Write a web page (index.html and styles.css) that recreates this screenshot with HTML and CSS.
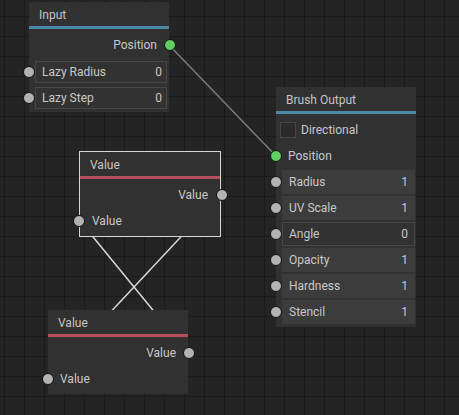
FILE: index.html
```html
<!DOCTYPE html>
<html>
<head>
<meta charset="utf-8">
<link rel="stylesheet" href="styles.css">
</head>
<body>
<div class="canvas">
  <svg class="wires" width="459" height="415" viewBox="0 0 459 415">
    <line x1="169" y1="45" x2="276" y2="156" class="wire"/>
    <line x1="80" y1="221" x2="188" y2="353" class="wire wire-sel"/>
    <line x1="220" y1="195" x2="48" y2="379" class="wire wire-sel"/>
  </svg>

  <div class="node node-input">
    <div class="node-title">Input</div>
    <div class="node-bar bar-blue"></div>
    <div class="node-body">
      <div class="row row-out"><span class="label">Position</span><span class="port port-out port-green"></span></div>
      <div class="row row-in row-compact"><span class="port port-in"></span><div class="field field-outline"><span>Lazy Radius</span><span>0</span></div></div>
      <div class="row row-in row-compact"><span class="port port-in"></span><div class="field field-outline"><span>Lazy Step</span><span>0</span></div></div>
    </div>
  </div>

  <div class="node node-brush">
    <div class="node-title">Brush Output</div>
    <div class="node-bar bar-blue"></div>
    <div class="node-body">
      <div class="row row-check"><span class="checkbox"></span><span class="label">Directional</span></div>
      <div class="row row-in"><span class="port port-in port-green"></span><span class="label label-in">Position</span></div>
      <div class="row row-in"><span class="port port-in"></span><div class="field"><span>Radius</span><span>1</span></div></div>
      <div class="row row-in"><span class="port port-in"></span><div class="field"><span>UV Scale</span><span>1</span></div></div>
      <div class="row row-in"><span class="port port-in"></span><div class="field field-outline"><span>Angle</span><span>0</span></div></div>
      <div class="row row-in"><span class="port port-in"></span><div class="field"><span>Opacity</span><span>1</span></div></div>
      <div class="row row-in"><span class="port port-in"></span><div class="field"><span>Hardness</span><span>1</span></div></div>
      <div class="row row-in"><span class="port port-in"></span><div class="field"><span>Stencil</span><span>1</span></div></div>
    </div>
  </div>

  <div class="node node-value1 node-selected">
    <div class="node-title">Value</div>
    <div class="node-bar bar-red"></div>
    <div class="node-body">
      <div class="row row-out"><span class="label">Value</span><span class="port port-out"></span></div>
      <div class="row row-in"><span class="port port-in"></span><span class="label label-in">Value</span></div>
    </div>
  </div>

  <div class="node node-value2">
    <div class="node-title">Value</div>
    <div class="node-bar bar-red"></div>
    <div class="node-body">
      <div class="row row-out"><span class="label">Value</span><span class="port port-out"></span></div>
      <div class="row row-in"><span class="port port-in"></span><span class="label label-in">Value</span></div>
    </div>
  </div>
</div>
</body>
</html>
```

FILE: styles.css
```css
html, body {
  margin: 0;
  padding: 0;
  background: #232323;
}

.canvas {
  position: relative;
  width: 459px;
  height: 415px;
  overflow: hidden;
  background-color: #242424;
  background-image:
    linear-gradient(to right, #1a1a1a 1px, transparent 1px),
    linear-gradient(to bottom, #1a1a1a 1px, transparent 1px);
  background-size: 20px 20px;
  background-position: 4px 16px;
  font-family: Roboto, "Noto Sans", sans-serif;
  font-size: 12px;
  color: #c8c8c8;
}

.wires {
  position: absolute;
  left: 0;
  top: 0;
}

.wire {
  stroke: #7c7c7c;
  stroke-width: 1.5;
}

.wire-sel {
  stroke: #d8d8d8;
}

.node {
  position: absolute;
  width: 140px;
  box-sizing: border-box;
  background: #313131;
  display: flex;
  flex-direction: column;
}

.node-selected {
  border: 1px solid #d6d6d6;
}

.node-input { left: 29px; top: 2px; }
.node-brush { left: 276px; top: 87px; }
.node-value1 { left: 79px; top: 151px; width: 142px; }
.node-value2 { left: 48px; top: 310px; }

.node-title {
  height: 24px;
  box-sizing: border-box;
  padding-top: 2px;
  line-height: 22px;
  padding-left: 10px;
  color: #c4c4c4;
}

.node-bar {
  height: 3px;
}

.bar-blue { background: #4a88a6; }
.bar-red { background: #b44f59; }

.node-body {
  display: flex;
  flex-direction: column;
  gap: 2px;
  padding: 4px 0 3px 0;
}

.row {
  position: relative;
  height: 24px;
  display: flex;
  align-items: center;
}

.row-compact {
  height: 22px;
  margin-top: 2px;
}

.row-out {
  justify-content: flex-end;
  padding-right: 12px;
}

.row-in {
  padding-left: 6px;
  padding-right: 1px;
}

.row-check {
  padding-left: 4px;
  gap: 5px;
}

.label-in {
  padding-left: 6px;
}

.port {
  position: absolute;
  top: 50%;
  width: 10px;
  height: 10px;
  margin-top: -6.5px;
  border-radius: 50%;
  background: #b3b3b3;
  border: 1.5px solid #111111;
}

.port-in { left: -6.5px; }
.port-out { right: -6.5px; }
.node-selected .port-in { left: -7.5px; }
.node-selected .port-out { right: -7.5px; }

.port-green { background: #5fcf5f; }

.field {
  flex: 1;
  height: 100%;
  box-sizing: border-box;
  display: flex;
  align-items: center;
  justify-content: space-between;
  padding: 0 6px 0 6px;
  background: #3c3c3c;
  border: 1px solid #3c3c3c;
}

.field-outline {
  background: #323232;
  border: 1px solid #474747;
}

.row-compact .field {
  margin-right: 1px;
  padding-right: 4px;
}

.checkbox {
  width: 16px;
  height: 16px;
  box-sizing: border-box;
  background: #2a2a2a;
  border: 1px solid #444444;
}
```
